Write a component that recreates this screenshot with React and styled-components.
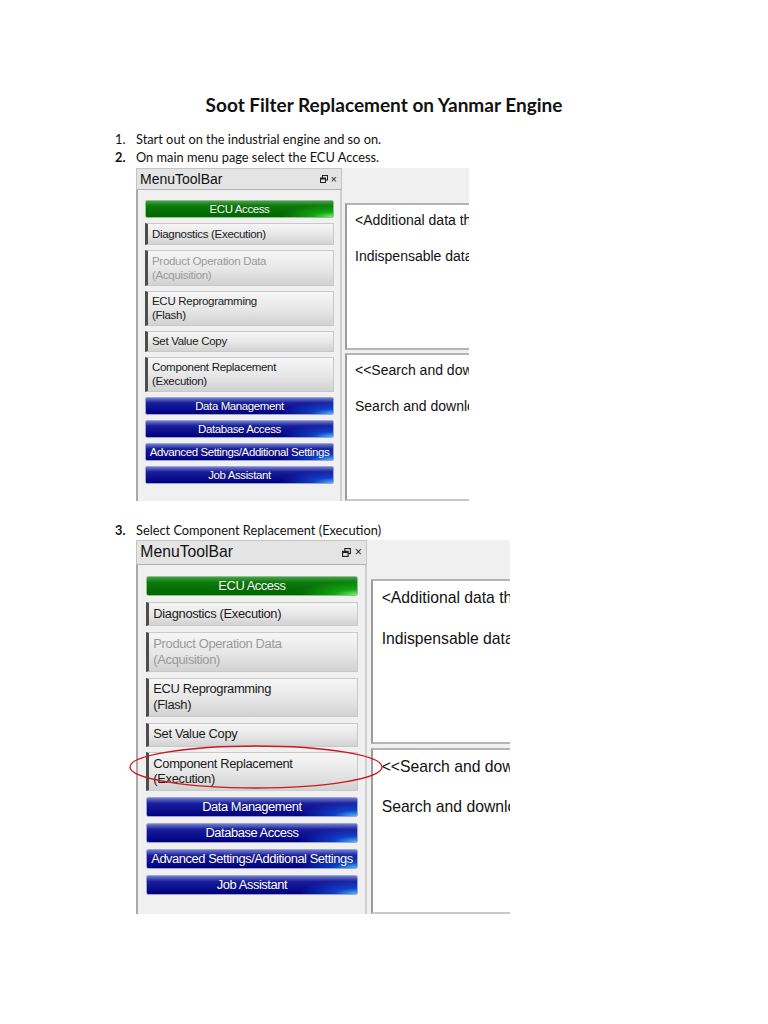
import React from "react";
import styled, { createGlobalStyle } from "styled-components";

const Global = createGlobalStyle`
  html, body { margin: 0; padding: 0; background: #ffffff; }
  body { font-family: Lato, "Open Sans", sans-serif; color: #111; }
`;

const Page = styled.div`
  width: 768px;
  min-height: 1024px;
  padding-top: 93px;
  box-sizing: border-box;
`;

const Title = styled.h1`
  margin: 0 0 13px;
  text-align: center;
  font-family: Lato, "Open Sans", sans-serif;
  font-weight: 700;
  font-size: 19px;
  line-height: 24px;
  color: #111;
`;

const Steps = styled.div`
  display: flex;
  flex-direction: column;
`;

const Step = styled.div`
  display: flex;
  padding-left: 115px;
  margin-top: ${(p) => p.$top || 0}px;
`;

const Num = styled.div`
  width: 21px;
  flex: none;
  font-size: 12.8px;
  line-height: 18px;
  font-weight: ${(p) => (p.$bold ? 700 : 400)};
`;

const StepBody = styled.div`
  display: flex;
  flex-direction: column;
`;

const StepText = styled.div`
  font-size: 12.8px;
  line-height: 18px;
  margin-bottom: ${(p) => p.$after || 0}px;
`;

const Figure = styled.div`
  position: relative;
  width: ${(p) => 333 * p.$scale}px;
`;

const Shot = styled.div`
  zoom: ${(p) => p.$scale};
  width: 333px;
  height: 333px;
  display: flex;
  background: #f0f0f0;
  font-family: "Liberation Sans", Arial, sans-serif;
  overflow: hidden;
`;

const LeftPane = styled.div`
  width: 206px;
  flex: none;
  display: flex;
  flex-direction: column;
`;

const PaneHeader = styled.div`
  height: 22px;
  box-sizing: border-box;
  display: flex;
  align-items: center;
  justify-content: space-between;
  padding: 0 4px 0 3px;
  background: #e4e4e4;
  border: 1px solid #c4c4c4;
  border-bottom-color: #b0b0b0;
  font-size: 14px;
  color: #111;
`;

const HeaderTools = styled.div`
  display: flex;
  align-items: center;
  gap: 3px;
  font-size: 11px;
  color: #222;
`;

const PaneBody = styled.div`
  flex: 1;
  display: flex;
  flex-direction: column;
  gap: 5px;
  padding: 10px 0 0 7px;
  border-left: 2px solid #a9a9a9;
  border-right: 2px solid #cfcfcf;
  box-sizing: border-box;
`;

const MenuButton = styled.div`
  width: 189px;
  height: ${(p) => p.$h}px;
  box-sizing: border-box;
  font-size: 11.5px;
  letter-spacing: -0.3px;
  line-height: 14px;
`;

const GrayButton = styled(MenuButton)`
  display: flex;
  flex-direction: column;
  justify-content: center;
  padding: 0 4px 1px 4px;
  background: linear-gradient(to bottom, #f6f6f6 0%, #e6e6e6 55%, #d2d2d2 100%);
  border: 1px solid #c9c9c9;
  border-left: 3px solid #4d4d4d;
  color: ${(p) => (p.$disabled ? "#9a9a9a" : "#1a1a1a")};
`;

const ColorButton = styled(MenuButton)`
  display: flex;
  align-items: center;
  justify-content: center;
  white-space: nowrap;
  color: #ffffff;
  letter-spacing: -0.4px;
  border-radius: 2px;
  border: 1px solid ${(p) => (p.$green ? "#8cc48c" : "#9aa4d8")};
  background: ${(p) =>
    p.$green
      ? "radial-gradient(ellipse 28% 80% at 100% 100%, #6cf56c 0%, rgba(30,200,30,0.6) 40%, rgba(0,120,0,0) 100%), linear-gradient(to bottom, #4a9f4a 0%, #0b7a0b 30%, #006600 100%)"
      : "radial-gradient(ellipse 28% 80% at 100% 100%, #4fb8ff 0%, rgba(20,100,240,0.6) 40%, rgba(0,0,130,0) 100%), linear-gradient(to bottom, #6f7ccc 0%, #1a1e9c 30%, #00007f 100%)"};
  text-shadow: 0 0 1px rgba(0, 0, 0, 0.4);
`;

const RightPane = styled.div`
  flex: 1;
  display: flex;
  flex-direction: column;
  gap: 3px;
  padding: 35px 0 0 3px;
`;

const DataPanel = styled.div`
  height: ${(p) => p.$h}px;
  flex: none;
  background: #ffffff;
  border-left: 2px solid #9c9c9c;
  border-top: 2px solid #b4b4b4;
  border-bottom: 2px solid ${(p) => (p.$last ? "#c8c8c8" : "#b4b4b4")};
  padding: 7px 0 0 8px;
  box-sizing: border-box;
  font-size: 14px;
  line-height: 16px;
  color: #111;
  white-space: nowrap;
  overflow: hidden;
`;

const PanelLine = styled.div`
  margin-bottom: 20px;
`;

const Ellipse = styled.svg`
  position: absolute;
  left: -7px;
  top: 205px;
  overflow: visible;
  pointer-events: none;
`;

const FloatIcon = () => (
  <svg width="8" height="8" viewBox="0 0 8 8">
    <rect x="2.5" y="0.5" width="5" height="4.5" fill="none" stroke="#222" strokeWidth="1" />
    <rect x="0.5" y="3" width="5" height="4.5" fill="#e4e4e4" stroke="#222" strokeWidth="1" />
    <rect x="0.5" y="3" width="5" height="1.5" fill="#222" />
  </svg>
);

const menu = [
  { kind: "green", label: "ECU Access", h: 18 },
  { kind: "gray", label: ["Diagnostics (Execution)"], h: 22 },
  { kind: "gray", label: ["Product Operation Data", "(Acquisition)"], h: 36, disabled: true },
  { kind: "gray", label: ["ECU Reprogramming", "(Flash)"], h: 35 },
  { kind: "gray", label: ["Set Value Copy"], h: 21 },
  { kind: "gray", label: ["Component Replacement", "(Execution)"], h: 35 },
  { kind: "blue", label: "Data Management", h: 18 },
  { kind: "blue", label: "Database Access", h: 18 },
  { kind: "blue", label: "Advanced Settings/Additional Settings", h: 18 },
  { kind: "blue", label: "Job Assistant", h: 18 },
];

function Screenshot({ scale }) {
  return (
    <Shot $scale={scale}>
      <LeftPane>
        <PaneHeader>
          <span>MenuToolBar</span>
          <HeaderTools>
            <FloatIcon />
            <span>×</span>
          </HeaderTools>
        </PaneHeader>
        <PaneBody>
          {menu.map((m) =>
            m.kind === "gray" ? (
              <GrayButton key={m.label[0]} $h={m.h} $disabled={m.disabled}>
                {m.label.map((l) => (
                  <span key={l}>{l}</span>
                ))}
              </GrayButton>
            ) : (
              <ColorButton key={m.label} $h={m.h} $green={m.kind === "green"}>
                {m.label}
              </ColorButton>
            )
          )}
        </PaneBody>
      </LeftPane>
      <RightPane>
        <DataPanel $h={147}>
          <PanelLine>&lt;Additional data that</PanelLine>
          <PanelLine>Indispensable data</PanelLine>
        </DataPanel>
        <DataPanel $h={148} $last>
          <PanelLine>&lt;&lt;Search and download</PanelLine>
          <PanelLine>Search and download</PanelLine>
        </DataPanel>
      </RightPane>
    </Shot>
  );
}

export default function App() {
  return (
    <Page>
      <Global />
      <Title>Soot Filter Replacement on Yanmar Engine</Title>
      <Steps>
        <Step>
          <Num>1.</Num>
          <StepBody>
            <StepText>Start out on the industrial engine and so on.</StepText>
          </StepBody>
        </Step>
        <Step>
          <Num $bold>2.</Num>
          <StepBody>
            <StepText $after={2}>On main menu page select the ECU Access.</StepText>
            <Figure $scale={1}>
              <Screenshot scale={1} />
            </Figure>
          </StepBody>
        </Step>
        <Step $top={20}>
          <Num $bold>3.</Num>
          <StepBody>
            <StepText $after={1}>Select Component Replacement (Execution)</StepText>
            <Figure $scale={1.123}>
              <Screenshot scale={1.123} />
              <Ellipse width="254" height="44">
                <ellipse cx="127" cy="22" rx="126" ry="21" fill="none" stroke="#c8191e" strokeWidth="1.4" />
              </Ellipse>
            </Figure>
          </StepBody>
        </Step>
      </Steps>
    </Page>
  );
}
